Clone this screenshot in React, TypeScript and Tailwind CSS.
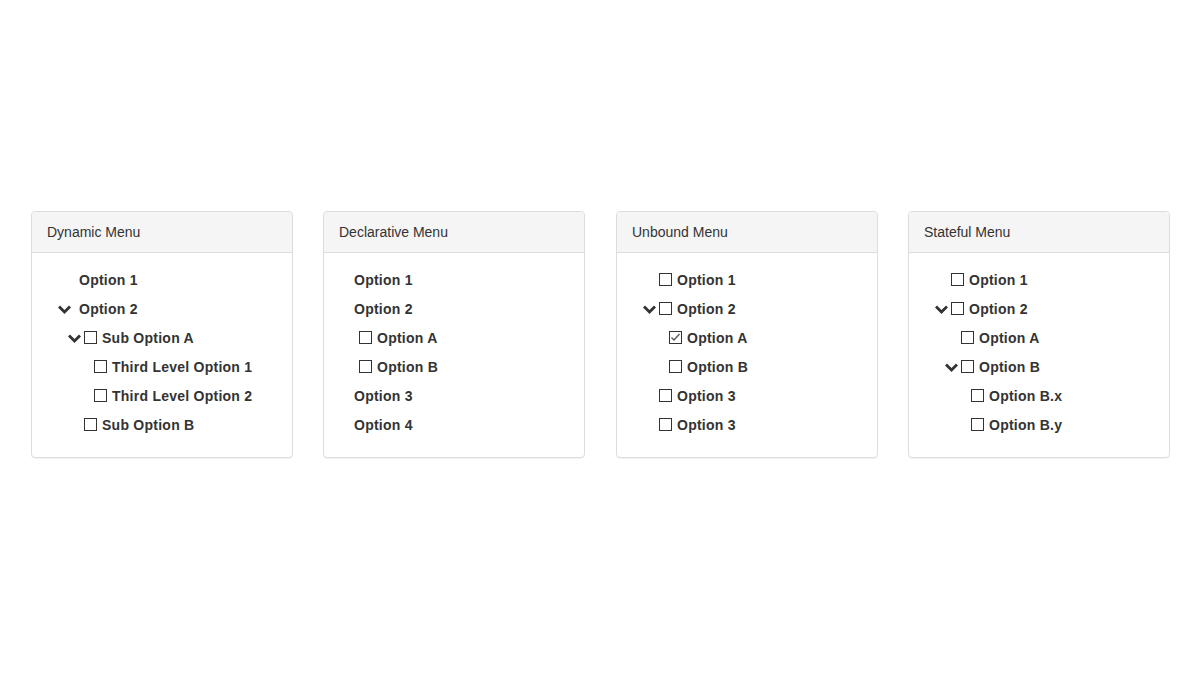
import React from 'react';

interface MenuItem {
  label: string;
  level: number;
  toggle?: boolean;
  spacer?: boolean;
  checkbox?: boolean;
  checked?: boolean;
}

interface MenuPanel {
  title: string;
  items: MenuItem[];
  offset: string;
}

const panels: MenuPanel[] = [
  {
    title: 'Dynamic Menu',
    offset: 'ml-0',
    items: [
      { label: 'Option 1', level: 1, spacer: true },
      { label: 'Option 2', level: 1, toggle: true },
      { label: 'Sub Option A', level: 2, toggle: true, checkbox: true },
      { label: 'Third Level Option 1', level: 3, spacer: true, checkbox: true },
      { label: 'Third Level Option 2', level: 3, spacer: true, checkbox: true },
      { label: 'Sub Option B', level: 2, spacer: true, checkbox: true },
    ],
  },
  {
    title: 'Declarative Menu',
    offset: 'ml-[30px]',
    items: [
      { label: 'Option 1', level: 1 },
      { label: 'Option 2', level: 1 },
      { label: 'Option A', level: 2, checkbox: true },
      { label: 'Option B', level: 2, checkbox: true },
      { label: 'Option 3', level: 1 },
      { label: 'Option 4', level: 1 },
    ],
  },
  {
    title: 'Unbound Menu',
    offset: 'ml-[31px]',
    items: [
      { label: 'Option 1', level: 1, spacer: true, checkbox: true },
      { label: 'Option 2', level: 1, toggle: true, checkbox: true },
      { label: 'Option A', level: 2, spacer: true, checkbox: true, checked: true },
      { label: 'Option B', level: 2, spacer: true, checkbox: true },
      { label: 'Option 3', level: 1, spacer: true, checkbox: true },
      { label: 'Option 3', level: 1, spacer: true, checkbox: true },
    ],
  },
  {
    title: 'Stateful Menu',
    offset: 'ml-[30px]',
    items: [
      { label: 'Option 1', level: 1, spacer: true, checkbox: true },
      { label: 'Option 2', level: 1, toggle: true, checkbox: true },
      { label: 'Option A', level: 2, spacer: true, checkbox: true },
      { label: 'Option B', level: 2, toggle: true, checkbox: true },
      { label: 'Option B.x', level: 3, spacer: true, checkbox: true },
      { label: 'Option B.y', level: 3, spacer: true, checkbox: true },
    ],
  },
];

const Chevron = () => (
  <svg width="17" height="10" viewBox="0 0 17 10" className="shrink-0">
    <polyline points="3,2.5 7.5,7 12,2.5" fill="none" stroke="#333" strokeWidth="2.8" strokeLinecap="square" />
  </svg>
);

const Checkbox = ({ checked }: { checked?: boolean }) => (
  <span className="w-[13px] h-[13px] border border-[#333] bg-white shrink-0 flex items-center justify-center -mt-[3px]">
    {checked && (
      <svg width="11" height="11" viewBox="0 0 11 11">
        <polyline points="1.5,5.5 4,8 9.5,2" fill="none" stroke="#555" strokeWidth="1.3" />
      </svg>
    )}
  </span>
);

const indent: Record<number, string> = {
  1: 'pl-[25px]',
  2: 'pl-[35px]',
  3: 'pl-[45px]',
};

export default function App() {
  return (
    <div className="w-[1200px] h-[680px] bg-white pt-[211px] pl-[31px] font-['Liberation_Sans',Arial,sans-serif] text-[14px] text-[#333]">
      <div className="flex">
        {panels.map((panel) => (
          <div key={panel.title} className={`w-[262px] shrink-0 border border-[#ddd] rounded-[4px] shadow-[0_1px_1px_rgba(0,0,0,0.05)] ${panel.offset}`}>
            <div className="h-[41px] bg-[#f5f5f5] border-b border-[#ddd] rounded-t-[3px] px-[15px] flex items-center">
              {panel.title}
            </div>
            <div className="pt-[13px] pb-[17px]">
              {panel.items.map((item, i) => (
                <div key={i} className={`h-[29px] flex items-center ${indent[item.level]}`}>
                  {item.toggle && <Chevron />}
                  {item.spacer && <span className="w-[17px] shrink-0" />}
                  {item.checkbox && <Checkbox checked={item.checked} />}
                  <span className="ml-[5px] font-bold whitespace-nowrap tracking-[0.25px]">{item.label}</span>
                </div>
              ))}
            </div>
          </div>
        ))}
      </div>
    </div>
  );
}
